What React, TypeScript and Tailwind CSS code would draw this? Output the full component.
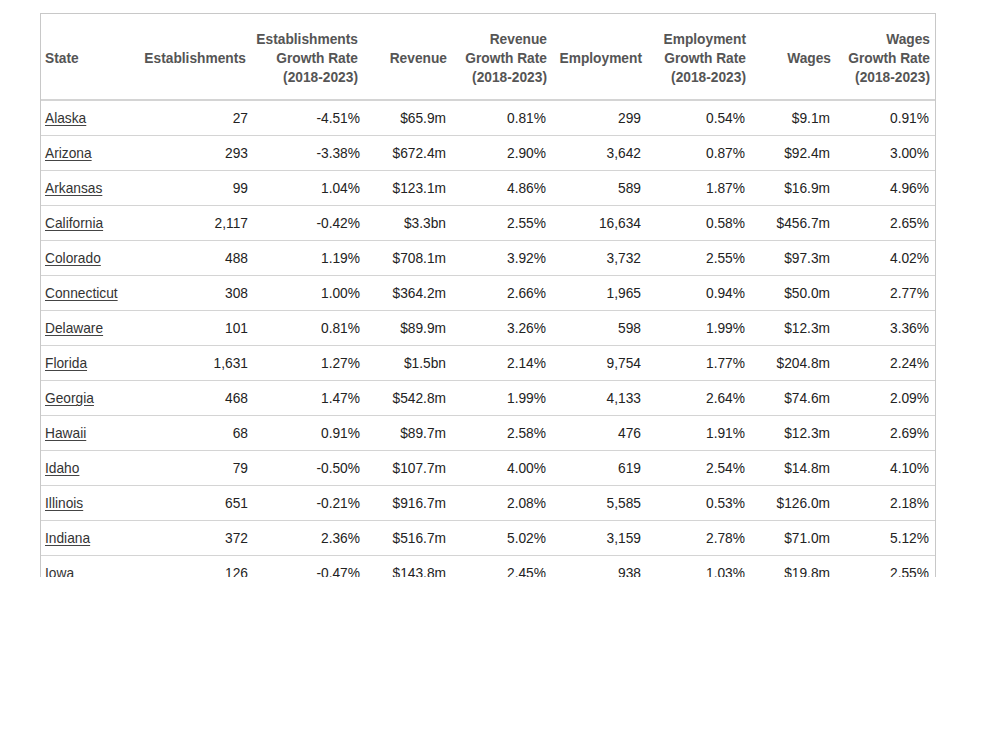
import React from "react";

const rows: string[][] = [
  ["Alaska", "27", "-4.51%", "$65.9m", "0.81%", "299", "0.54%", "$9.1m", "0.91%"],
  ["Arizona", "293", "-3.38%", "$672.4m", "2.90%", "3,642", "0.87%", "$92.4m", "3.00%"],
  ["Arkansas", "99", "1.04%", "$123.1m", "4.86%", "589", "1.87%", "$16.9m", "4.96%"],
  ["California", "2,117", "-0.42%", "$3.3bn", "2.55%", "16,634", "0.58%", "$456.7m", "2.65%"],
  ["Colorado", "488", "1.19%", "$708.1m", "3.92%", "3,732", "2.55%", "$97.3m", "4.02%"],
  ["Connecticut", "308", "1.00%", "$364.2m", "2.66%", "1,965", "0.94%", "$50.0m", "2.77%"],
  ["Delaware", "101", "0.81%", "$89.9m", "3.26%", "598", "1.99%", "$12.3m", "3.36%"],
  ["Florida", "1,631", "1.27%", "$1.5bn", "2.14%", "9,754", "1.77%", "$204.8m", "2.24%"],
  ["Georgia", "468", "1.47%", "$542.8m", "1.99%", "4,133", "2.64%", "$74.6m", "2.09%"],
  ["Hawaii", "68", "0.91%", "$89.7m", "2.58%", "476", "1.91%", "$12.3m", "2.69%"],
  ["Idaho", "79", "-0.50%", "$107.7m", "4.00%", "619", "2.54%", "$14.8m", "4.10%"],
  ["Illinois", "651", "-0.21%", "$916.7m", "2.08%", "5,585", "0.53%", "$126.0m", "2.18%"],
  ["Indiana", "372", "2.36%", "$516.7m", "5.02%", "3,159", "2.78%", "$71.0m", "5.12%"],
  ["Iowa", "126", "-0.47%", "$143.8m", "2.45%", "938", "1.03%", "$19.8m", "2.55%"],
];

const widths = [
  "w-[97px]",
  "w-[116px]",
  "w-[112px]",
  "w-[86px]",
  "w-[100px]",
  "w-[95px]",
  "w-[104px]",
  "w-[85px]",
  "w-[99px]",
];

const headers: string[][] = [
  ["State"],
  ["Establishments"],
  ["Establishments", "Growth Rate", "(2018-2023)"],
  ["Revenue"],
  ["Revenue", "Growth Rate", "(2018-2023)"],
  ["Employment"],
  ["Employment", "Growth Rate", "(2018-2023)"],
  ["Wages"],
  ["Wages", "Growth Rate", "(2018-2023)"],
];

export default function App() {
  return (
    <div className="w-[1000px] h-[750px] bg-white pt-[13px] pl-[40px]" style={{ fontFamily: '"Liberation Sans", Arial, sans-serif' }}>
      <div className="w-[896px] h-[564px] overflow-hidden border-t border-l border-r border-[#c8c8c8]">
        <table className="border-collapse table-fixed w-[894px] text-[13.75px]">
          <thead>
            <tr className="h-[86px] border-b-2 border-[#d4d4d4]">
              {headers.map((h, i) => (
                <th
                  key={i}
                  className={`${widths[i]} font-bold text-[#555] leading-[19px] align-middle pt-[4px] ${
                    i === 0 ? "text-left pl-[4px]" : "text-right pr-[5px]"
                  } ${i === 1 ? "pr-[8px]" : ""} ${i === 2 ? "pr-[8px]" : ""}`}
                >
                  {h.map((line, j) => (
                    <div key={j} className="whitespace-nowrap">{line}</div>
                  ))}
                </th>
              ))}
            </tr>
          </thead>
          <tbody>
            {rows.map((r, ri) => (
              <tr key={ri} className="h-[35px] border-b border-[#d4d4d4]">
                {r.map((c, ci) => (
                  <td
                    key={ci}
                    className={`text-[#222] align-middle whitespace-nowrap pt-[4px] ${
                      ci === 0 ? "text-left pl-[4px]" : "text-right pr-[6px]"
                    }`}
                  >
                    {ci === 0 ? (
                      <a className="underline underline-offset-[2px] decoration-[#444] text-[#333]">{c}</a>
                    ) : (
                      c
                    )}
                  </td>
                ))}
              </tr>
            ))}
          </tbody>
        </table>
      </div>
    </div>
  );
}
